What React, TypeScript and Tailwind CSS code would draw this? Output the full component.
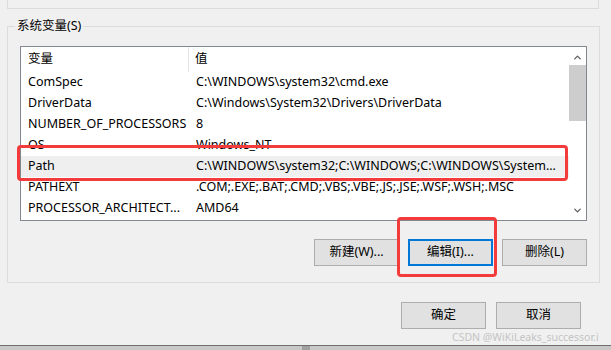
import { ChevronUp, ChevronDown } from 'lucide-react';

const ROWS: Array<{ name: string; value: string; selected?: boolean }> = [
  { name: 'ComSpec', value: 'C:\\WINDOWS\\system32\\cmd.exe' },
  { name: 'DriverData', value: 'C:\\Windows\\System32\\Drivers\\DriverData' },
  { name: 'NUMBER_OF_PROCESSORS', value: '8' },
  { name: 'OS', value: 'Windows_NT' },
  { name: 'Path', value: 'C:\\WINDOWS\\system32;C:\\WINDOWS;C:\\WINDOWS\\System...', selected: true },
  { name: 'PATHEXT', value: '.COM;.EXE;.BAT;.CMD;.VBS;.VBE;.JS;.JSE;.WSF;.WSH;.MSC' },
  { name: 'PROCESSOR_ARCHITECT...', value: 'AMD64' },
];

function WinButton({ children, focused }: { children: React.ReactNode; focused?: boolean }) {
  return (
    <div
      className={
        'flex h-[27px] w-[85px] items-center justify-center bg-[#e1e1e1] text-[12.5px] text-black ' +
        (focused ? 'border-2 border-[#0078d7]' : 'border border-[#adadad]')
      }
    >
      {children}
    </div>
  );
}

export default function App() {
  return (
    <div className="relative h-[350px] w-[611px] overflow-hidden bg-[#f0f0f0] font-['Noto_Sans','Noto_Sans_CJK_SC',sans-serif] text-[12.5px] text-black">
      {/* tail of the user variables group */}
      <div className="ml-[7px] h-[9px] w-[592px] border-x border-b border-[#dcdcdc]" />

      {/* system variables group */}
      <div className="relative ml-[7px] mt-[17px] h-[257px] w-[593px] border border-[#dcdcdc]">
        <span className="absolute left-[7px] top-[-10px] bg-[#f0f0f0] px-[2px] leading-[18px]">系统变量(S)</span>

        <div className="ml-[12px] mt-[19px] flex h-[175px] w-[567px] border border-[#828790] bg-white">
          <div className="flex-1 overflow-hidden">
            <div className="flex h-[25px] items-center">
              <div className="flex h-full w-[168px] items-center border-r border-[#e5e5e5] pl-[7px]">变量</div>
              <div className="pl-[6px]">值</div>
            </div>
            {ROWS.map((r) => (
              <div
                key={r.name}
                className={'flex h-[21px] items-center whitespace-nowrap ' + (r.selected ? 'bg-[#efefef]' : '')}
              >
                <div className="w-[168px] pl-[7px]">{r.name}</div>
                <div className="pl-[7px]">{r.value}</div>
              </div>
            ))}
          </div>
          <div className="flex w-[17px] flex-col items-center">
            <ChevronUp className="mt-[5px] h-[11px] w-[11px] text-[#606060]" strokeWidth={3} />
            <div className="mt-[2px] h-[56px] w-[17px] bg-[#cdcdcd]" />
            <div className="flex-1" />
            <ChevronDown className="mb-[4px] h-[11px] w-[11px] text-[#606060]" strokeWidth={3} />
          </div>
        </div>

        <div className="mt-[18px] mr-[12px] flex justify-end gap-[9px]">
          <WinButton>新建(W)...</WinButton>
          <WinButton focused>编辑(I)...</WinButton>
          <WinButton>删除(L)</WinButton>
        </div>
      </div>

      <div className="mt-[19px] mr-[30px] flex justify-end gap-[10px]">
        <WinButton>确定</WinButton>
        <WinButton>取消</WinButton>
      </div>

      {/* window bottom edge */}
      <div className="absolute bottom-0 left-0 h-[5px] w-full border-t border-[#6e6e6e] bg-[#c8c8c8]">
        <div className="ml-[302px] h-full w-[8px] bg-[#a0a0a0]" />
      </div>

      {/* watermark */}
      <span className="absolute left-[452px] top-[330px] whitespace-nowrap text-[10.5px] text-[#c4c4c4]">
        CSDN @WiKiLeaks_successor.i
      </span>

      {/* red annotations */}
      <div className="absolute left-[17px] top-[145px] h-[36px] w-[551px] rounded-[4px] border-[3px] border-[#f43b3b]" />
      <div className="absolute left-[397px] top-[217px] h-[60px] w-[100px] rounded-[4px] border-[3px] border-[#f43b3b]" />
    </div>
  );
}
